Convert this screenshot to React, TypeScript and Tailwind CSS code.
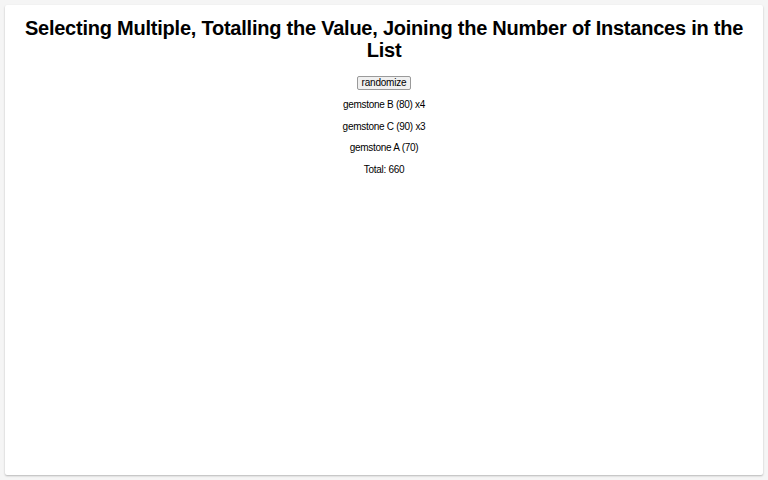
export default function App() {
  return (
    <div className="min-h-[480px] bg-[#f5f5f5] p-[5px] font-['Liberation_Sans',Arial,sans-serif]">
      <div className="flex min-h-[470px] flex-col items-center rounded-[2px] bg-white pt-[12px] text-center text-black shadow-[0_1px_2px_rgba(0,0,0,0.25)]">
        <h1 className="px-[16px] text-[20px] font-bold leading-[22px] tracking-[-0.23px]">
          Selecting Multiple, Totalling the Value, Joining the Number of Instances in the List
        </h1>
        <button
          type="button"
          className="mt-[15px] rounded-[2px] border border-[#9a9a9a] bg-[#f0f0f0] px-[4px] text-[10px] leading-[12px] tracking-[-0.2px]"
        >
          randomize
        </button>
        <div className="mt-[9px] text-[10px] leading-[12px] tracking-[-0.28px]">gemstone B (80) x4</div>
        <div className="mt-[9.5px] text-[10px] leading-[12px] tracking-[-0.28px]">gemstone C (90) x3</div>
        <div className="mt-[9.5px] text-[10px] leading-[12px] tracking-[-0.28px]">gemstone A (70)</div>
        <div className="mt-[9.5px] text-[10px] leading-[12px] tracking-[-0.28px]">Total: 660</div>
      </div>
    </div>
  );
}
